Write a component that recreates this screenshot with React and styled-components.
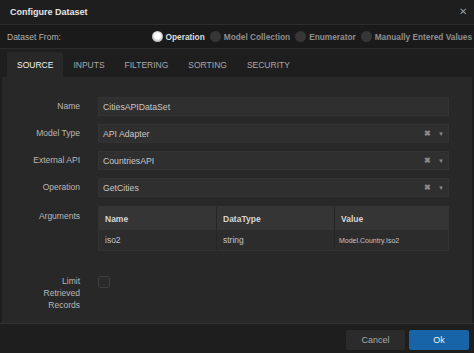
import React from 'react';
import styled, { createGlobalStyle } from 'styled-components';

const Global = createGlobalStyle`
  html, body { margin: 0; padding: 0; background: #1e1e1e; }
  body { font-family: 'Liberation Sans', Arial, sans-serif; font-size: 8.5px; }
  * { box-sizing: border-box; }
`;

const Dialog = styled.div`
  width: 474px;
  height: 353px;
  background: #1e1e1e;
  display: flex;
  flex-direction: column;
  overflow: hidden;
`;

const Header = styled.div`
  height: 25px;
  display: flex;
  align-items: center;
  justify-content: space-between;
  padding: 0 7px 0 10px;
  border-bottom: 1px solid #2c2c2c;
`;

const Title = styled.h2`
  margin: 0;
  font-size: 9px;
  font-weight: 700;
  color: #e6e6e6;
`;

const Close = styled.span`
  color: #9a9a9a;
  font-size: 10px;
  line-height: 1;
`;

const SourceRow = styled.div`
  height: 24px;
  display: flex;
  align-items: center;
  justify-content: space-between;
  padding: 0 2px 0 7px;
  background: #1a1a1a;
  border-bottom: 1px solid #2c2c2c;
`;

const SourceLabel = styled.span`
  color: #b2b2b2;
  font-size: 8.5px;
`;

const Radios = styled.div`
  display: flex;
  align-items: center;
  gap: 5px;
`;

const Radio = styled.label`
  display: flex;
  align-items: center;
  gap: 3px;
  font-weight: 700;
  font-size: 8.3px;
  color: ${p => (p.checked ? '#dedede' : '#8e8e8e')};
`;

const Dot = styled.span`
  width: 11px;
  height: 11px;
  border-radius: 50%;
  background: ${p =>
    p.checked
      ? 'radial-gradient(circle at 50% 45%, #ffffff 0 35%, #c8c8c8 60%, #9a9a9a 100%)'
      : '#363636'};
`;

const Tabs = styled.div`
  height: 28px;
  display: flex;
  align-items: flex-end;
  padding-left: 7px;
`;

const Tab = styled.div`
  height: 25px;
  padding: 0 10px;
  display: flex;
  align-items: center;
  font-size: 8.5px;
  color: ${p => (p.active ? '#f4f4f4' : '#a8a8a8')};
  background: ${p => (p.active ? '#282828' : 'transparent')};
  border-top-left-radius: 2px;
  border-top-right-radius: 2px;
`;

const Panel = styled.div`
  margin: 0 2px;
  height: 246px;
  background: #282828;
  padding: 20px 23px 0 0;
  display: grid;
  grid-template-columns: 78px 1fr;
  column-gap: 18px;
  row-gap: 8px;
  align-content: start;
`;

const Label = styled.div`
  text-align: right;
  color: #b8b8b8;
  font-size: 8.5px;
  line-height: ${p => p.lh || '19px'};
  margin-top: ${p => p.mt || 0}px;
`;

const Input = styled.div`
  height: 19px;
  background: #2f2f2f;
  border: 1px solid #333;
  display: flex;
  align-items: center;
  padding: 0 4px 0 4px;
  color: #c8c8c8;
  font-size: 8.7px;
`;

const Value = styled.span`
  flex: 1;
`;

const Clear = styled.span`
  color: #8a8a8a;
  font-size: 8px;
  font-weight: 700;
  margin-right: 7px;
`;

const Caret = styled.span`
  color: #8a8a8a;
  font-size: 6px;
`;

const Table = styled.div`
  margin-top: 1px;
  display: grid;
  grid-template-columns: 117px 118px 1fr;
  border: 1px solid #333;
`;

const Cell = styled.div`
  height: ${p => (p.head ? '23px' : '20px')};
  display: flex;
  align-items: center;
  padding-left: ${p => (p.small ? 4 : 6)}px;
  background: ${p => (p.head ? '#353535' : '#2c2c2c')};
  border-left: ${p => (p.first ? 'none' : '1px solid #262626')};
  color: ${p => (p.head ? '#d4d4d4' : '#c4c4c4')};
  font-weight: ${p => (p.head ? 700 : 400)};
  font-size: ${p => (p.small ? '7px' : '8.5px')};
`;

const CheckCell = styled.div`
  margin-top: ${p => p.mt}px;
`;

const Check = styled.div`
  width: 12px;
  height: 12px;
  border: 1px solid #3c3c3c;
  border-radius: 2px;
  background: #2a2a2a;
`;

const Footer = styled.div`
  flex: 1;
  border-top: 1px solid #333;
  display: flex;
  justify-content: flex-end;
  align-items: flex-start;
  gap: 4px;
  padding: 6px 5px 0 0;
`;

const Button = styled.button`
  height: 20px;
  width: ${p => p.w}px;
  border: none;
  border-radius: 2px;
  font-family: inherit;
  font-size: 9px;
  color: ${p => (p.primary ? '#f2f2f2' : '#a8a8a8')};
  background: ${p => (p.primary ? '#1864a8' : '#2b2b2b')};
`;

const fields = [
  { label: 'Name', value: 'CitiesAPIDataSet' },
  { label: 'Model Type', value: 'API Adapter', select: true },
  { label: 'External API', value: 'CountriesAPI', select: true },
  { label: 'Operation', value: 'GetCities', select: true },
];

const sources = ['Operation', 'Model Collection', 'Enumerator', 'Manually Entered Values'];
const tabs = ['SOURCE', 'INPUTS', 'FILTERING', 'SORTING', 'SECURITY'];

export default function App() {
  return (
    <Dialog>
      <Global />
      <Header>
        <Title>Configure Dataset</Title>
        <Close>✕</Close>
      </Header>
      <SourceRow>
        <SourceLabel>Dataset From:</SourceLabel>
        <Radios>
          {sources.map((s, i) => (
            <Radio key={s} checked={i === 0}>
              <Dot checked={i === 0} />
              {s}
            </Radio>
          ))}
        </Radios>
      </SourceRow>
      <Tabs>
        {tabs.map((t, i) => (
          <Tab key={t} active={i === 0}>{t}</Tab>
        ))}
      </Tabs>
      <Panel>
        {fields.map(f => (
          <React.Fragment key={f.label}>
            <Label>{f.label}</Label>
            <Input>
              <Value>{f.value}</Value>
              {f.select && <Clear>✖</Clear>}
              {f.select && <Caret>▼</Caret>}
            </Input>
          </React.Fragment>
        ))}
        <Label lh="20px" mt={1}>Arguments</Label>
        <Table>
          <Cell head first>Name</Cell>
          <Cell head>DataType</Cell>
          <Cell head>Value</Cell>
          <Cell first>iso2</Cell>
          <Cell>string</Cell>
          <Cell small>Model.Country.Iso2</Cell>
        </Table>
        <Label lh="12px" mt={16}>
          Limit<br />Retrieved<br />Records
        </Label>
        <CheckCell mt={17}>
          <Check />
        </CheckCell>
      </Panel>
      <Footer>
        <Button w={59}>Cancel</Button>
        <Button w={60} primary>Ok</Button>
      </Footer>
    </Dialog>
  );
}
